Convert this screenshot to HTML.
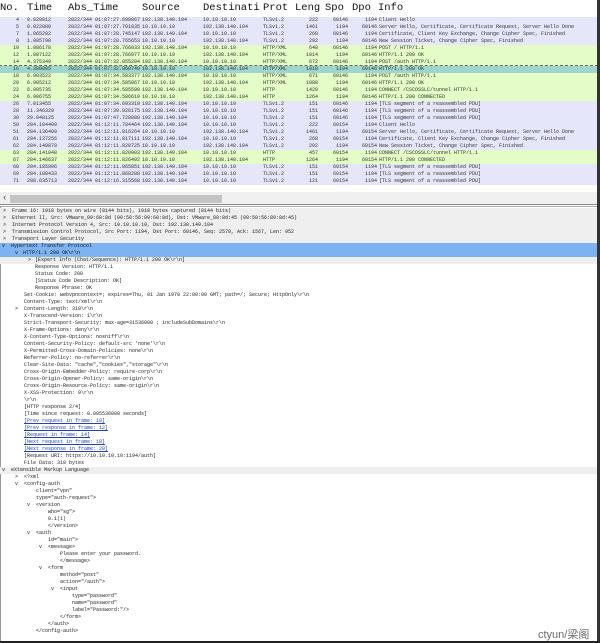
<!DOCTYPE html>
<html><head><meta charset="utf-8"><style>
*{margin:0;padding:0;box-sizing:border-box}
body{width:600px;height:643px;overflow:hidden;background:#fff;position:relative;font-family:"Liberation Mono",monospace;color:#222}
.hd{position:absolute;top:0;left:0;width:600px;height:17px;font-size:10.5px;line-height:16px;color:#111}
.hd span{position:absolute;top:0}
.r{position:absolute;left:0;width:597px;height:7px;font-size:5px;line-height:7px;color:#333;white-space:pre}
.r span{position:absolute;top:0}
.t{background:#e6e6fb}.h{background:#e4fcc6}.s{background:#9fd6cc;outline:1px dashed #666}
.d{position:absolute;left:0;width:597px;height:7px;font-size:5px;line-height:7px;white-space:pre;color:#222}
.g{background:#efefef}.b{background:#7db3f0;color:#112}
.ar{position:absolute;top:0;font-size:5px}
a{color:#2040c0;text-decoration:underline}
</style></head><body>
<div class="hd"><span style="left:0">No.</span><span style="left:27px">Time</span><span style="left:68px">Abs_Time</span><span style="left:142px">Source</span><span style="left:203px">Destinati</span><span style="left:263px">Prot</span><span style="left:295px">Leng</span><span style="left:325px">Spo</span><span style="left:352px">Dpo</span><span style="left:378px">Info</span></div>

<div class="r t" style="top:17px"><span style="right:578px">4</span><span style="left:27px">0.020012</span><span style="left:68px">2022/344 01:07:27.699867</span><span style="left:142px">192.138.140.104</span><span style="left:203px">10.10.10.10</span><span style="left:263px">TLSv1.2</span><span style="right:279px">222</span><span style="right:249px">60146</span><span style="right:220px">1194</span><span style="left:379px">Client Hello</span></div>
<div class="r t" style="top:24px"><span style="right:578px">5</span><span style="left:27px">0.022080</span><span style="left:68px">2022/344 01:07:27.701835</span><span style="left:142px">10.10.10.10</span><span style="left:203px">192.138.140.104</span><span style="left:263px">TLSv1.2</span><span style="right:279px">1461</span><span style="right:249px">1194</span><span style="right:220px">60146</span><span style="left:379px">Server Hello, Certificate, Certificate Request, Server Hello Done</span></div>
<div class="r t" style="top:31px"><span style="right:578px">7</span><span style="left:27px">1.065292</span><span style="left:68px">2022/344 01:07:28.745147</span><span style="left:142px">192.138.140.104</span><span style="left:203px">10.10.10.10</span><span style="left:263px">TLSv1.2</span><span style="right:279px">268</span><span style="right:249px">60146</span><span style="right:220px">1194</span><span style="left:379px">Certificate, Client Key Exchange, Change Cipher Spec, Finished</span></div>
<div class="r t" style="top:38px"><span style="right:578px">8</span><span style="left:27px">1.085798</span><span style="left:68px">2022/344 01:07:28.765653</span><span style="left:142px">10.10.10.10</span><span style="left:203px">192.138.140.104</span><span style="left:263px">TLSv1.2</span><span style="right:279px">292</span><span style="right:249px">1194</span><span style="right:220px">60146</span><span style="left:379px">New Session Ticket, Change Cipher Spec, Finished</span></div>
<div class="r h" style="top:45px"><span style="right:578px">10</span><span style="left:27px">1.086178</span><span style="left:68px">2022/344 01:07:28.766033</span><span style="left:142px">192.138.140.104</span><span style="left:203px">10.10.10.10</span><span style="left:263px">HTTP/XML</span><span style="right:279px">648</span><span style="right:249px">60146</span><span style="right:220px">1194</span><span style="left:379px">POST / HTTP/1.1</span></div>
<div class="r h" style="top:52px"><span style="right:578px">12</span><span style="left:27px">1.087122</span><span style="left:68px">2022/344 01:07:28.766977</span><span style="left:142px">10.10.10.10</span><span style="left:203px">192.138.140.104</span><span style="left:263px">HTTP/XML</span><span style="right:279px">1014</span><span style="right:249px">1194</span><span style="right:220px">60146</span><span style="left:379px">HTTP/1.1 200 OK</span></div>
<div class="r h" style="top:59px"><span style="right:578px">14</span><span style="left:27px">4.375349</span><span style="left:68px">2022/344 01:07:32.055204</span><span style="left:142px">192.138.140.104</span><span style="left:203px">10.10.10.10</span><span style="left:263px">HTTP/XML</span><span style="right:279px">672</span><span style="right:249px">60146</span><span style="right:220px">1194</span><span style="left:379px">POST /auth HTTP/1.1</span></div>
<div class="r s" style="top:66px"><span style="right:578px">16</span><span style="left:27px">4.380885</span><span style="left:68px">2022/344 01:07:32.060740</span><span style="left:142px">10.10.10.10</span><span style="left:203px">192.138.140.104</span><span style="left:263px">HTTP/XML</span><span style="right:279px">1018</span><span style="right:249px">1194</span><span style="right:220px">60146</span><span style="left:379px">HTTP/1.1 200 OK</span></div>
<div class="r h" style="top:73px"><span style="right:578px">18</span><span style="left:27px">6.903522</span><span style="left:68px">2022/344 01:07:34.583377</span><span style="left:142px">192.138.140.104</span><span style="left:203px">10.10.10.10</span><span style="left:263px">HTTP/XML</span><span style="right:279px">671</span><span style="right:249px">60146</span><span style="right:220px">1194</span><span style="left:379px">POST /auth HTTP/1.1</span></div>
<div class="r h" style="top:80px"><span style="right:578px">20</span><span style="left:27px">6.905212</span><span style="left:68px">2022/344 01:07:34.585067</span><span style="left:142px">10.10.10.10</span><span style="left:203px">192.138.140.104</span><span style="left:263px">HTTP/XML</span><span style="right:279px">1088</span><span style="right:249px">1194</span><span style="right:220px">60146</span><span style="left:379px">HTTP/1.1 200 OK</span></div>
<div class="r h" style="top:87px"><span style="right:578px">22</span><span style="left:27px">6.905735</span><span style="left:68px">2022/344 01:07:34.585590</span><span style="left:142px">192.138.140.104</span><span style="left:203px">10.10.10.10</span><span style="left:263px">HTTP</span><span style="right:279px">1420</span><span style="right:249px">60146</span><span style="right:220px">1194</span><span style="left:379px">CONNECT /CSCOSSLC/tunnel HTTP/1.1</span></div>
<div class="r h" style="top:94px"><span style="right:578px">24</span><span style="left:27px">6.906755</span><span style="left:68px">2022/344 01:07:34.586610</span><span style="left:142px">10.10.10.10</span><span style="left:203px">192.138.140.104</span><span style="left:263px">HTTP</span><span style="right:279px">1264</span><span style="right:249px">1194</span><span style="right:220px">60146</span><span style="left:379px">HTTP/1.1 200 CONNECTED</span></div>
<div class="r t" style="top:101px"><span style="right:578px">26</span><span style="left:27px">7.013455</span><span style="left:68px">2022/344 01:07:34.693310</span><span style="left:142px">192.138.140.104</span><span style="left:203px">10.10.10.10</span><span style="left:263px">TLSv1.2</span><span style="right:279px">151</span><span style="right:249px">60146</span><span style="right:220px">1194</span><span style="left:379px">[TLS segment of a reassembled PDU]</span></div>
<div class="r t" style="top:108px"><span style="right:578px">28</span><span style="left:27px">11.346320</span><span style="left:68px">2022/344 01:07:39.026175</span><span style="left:142px">192.138.140.104</span><span style="left:203px">10.10.10.10</span><span style="left:263px">TLSv1.2</span><span style="right:279px">151</span><span style="right:249px">60146</span><span style="right:220px">1194</span><span style="left:379px">[TLS segment of a reassembled PDU]</span></div>
<div class="r t" style="top:115px"><span style="right:578px">30</span><span style="left:27px">20.048125</span><span style="left:68px">2022/344 01:07:47.728080</span><span style="left:142px">192.138.140.104</span><span style="left:203px">10.10.10.10</span><span style="left:263px">TLSv1.2</span><span style="right:279px">151</span><span style="right:249px">60146</span><span style="right:220px">1194</span><span style="left:379px">[TLS segment of a reassembled PDU]</span></div>
<div class="r t" style="top:122px"><span style="right:578px">50</span><span style="left:27px">284.104409</span><span style="left:68px">2022/344 01:12:11.784464</span><span style="left:142px">192.138.140.104</span><span style="left:203px">10.10.10.10</span><span style="left:263px">TLSv1.2</span><span style="right:279px">222</span><span style="right:249px">60154</span><span style="right:220px">1194</span><span style="left:379px">Client Hello</span></div>
<div class="r t" style="top:129px"><span style="right:578px">51</span><span style="left:27px">284.136409</span><span style="left:68px">2022/344 01:12:11.816264</span><span style="left:142px">10.10.10.10</span><span style="left:203px">192.138.140.104</span><span style="left:263px">TLSv1.2</span><span style="right:279px">1461</span><span style="right:249px">1194</span><span style="right:220px">60154</span><span style="left:379px">Server Hello, Certificate, Certificate Request, Server Hello Done</span></div>
<div class="r t" style="top:136px"><span style="right:578px">61</span><span style="left:27px">284.137256</span><span style="left:68px">2022/344 01:12:11.817111</span><span style="left:142px">192.138.140.104</span><span style="left:203px">10.10.10.10</span><span style="left:263px">TLSv1.2</span><span style="right:279px">268</span><span style="right:249px">60154</span><span style="right:220px">1194</span><span style="left:379px">Certificate, Client Key Exchange, Change Cipher Spec, Finished</span></div>
<div class="r t" style="top:143px"><span style="right:578px">62</span><span style="left:27px">284.140870</span><span style="left:68px">2022/344 01:12:11.820725</span><span style="left:142px">10.10.10.10</span><span style="left:203px">192.138.140.104</span><span style="left:263px">TLSv1.2</span><span style="right:279px">292</span><span style="right:249px">1194</span><span style="right:220px">60154</span><span style="left:379px">New Session Ticket, Change Cipher Spec, Finished</span></div>
<div class="r h" style="top:150px"><span style="right:578px">63</span><span style="left:27px">284.141048</span><span style="left:68px">2022/344 01:12:11.820903</span><span style="left:142px">192.138.140.104</span><span style="left:203px">10.10.10.10</span><span style="left:263px">HTTP</span><span style="right:279px">457</span><span style="right:249px">60154</span><span style="right:220px">1194</span><span style="left:379px">CONNECT /CSCOSSLC/tunnel HTTP/1.1</span></div>
<div class="r h" style="top:157px"><span style="right:578px">67</span><span style="left:27px">284.146637</span><span style="left:68px">2022/344 01:12:11.826492</span><span style="left:142px">10.10.10.10</span><span style="left:203px">192.138.140.104</span><span style="left:263px">HTTP</span><span style="right:279px">1264</span><span style="right:249px">1194</span><span style="right:220px">60154</span><span style="left:379px">HTTP/1.1 200 CONNECTED</span></div>
<div class="r t" style="top:164px"><span style="right:578px">68</span><span style="left:27px">284.185996</span><span style="left:68px">2022/344 01:12:11.865851</span><span style="left:142px">192.138.140.104</span><span style="left:203px">10.10.10.10</span><span style="left:263px">TLSv1.2</span><span style="right:279px">151</span><span style="right:249px">60154</span><span style="right:220px">1194</span><span style="left:379px">[TLS segment of a reassembled PDU]</span></div>
<div class="r t" style="top:171px"><span style="right:578px">69</span><span style="left:27px">284.188433</span><span style="left:68px">2022/344 01:12:11.868288</span><span style="left:142px">192.138.140.104</span><span style="left:203px">10.10.10.10</span><span style="left:263px">TLSv1.2</span><span style="right:279px">151</span><span style="right:249px">60154</span><span style="right:220px">1194</span><span style="left:379px">[TLS segment of a reassembled PDU]</span></div>
<div class="r t" style="top:178px"><span style="right:578px">71</span><span style="left:27px">288.635713</span><span style="left:68px">2022/344 01:12:16.315568</span><span style="left:142px">192.138.140.104</span><span style="left:203px">10.10.10.10</span><span style="left:263px">TLSv1.2</span><span style="right:279px">121</span><span style="right:249px">60154</span><span style="right:220px">1194</span><span style="left:379px">[TLS segment of a reassembled PDU]</span></div>

<div style="position:absolute;top:192px;left:0;width:597px;height:12px;background:#f0f0f0"></div>
<div style="position:absolute;top:195px;left:10px;width:212px;height:8px;background:#c4c4c4"></div>
<div style="position:absolute;top:192px;left:2px;font-size:9px;line-height:12px;color:#444">&lsaquo;</div>
<div style="position:absolute;top:204px;left:0;width:597px;height:1px;background:#888"></div>
<div style="position:absolute;top:206px;left:0;width:597px;height:1px;background:#aaa"></div>
<div style="position:absolute;top:207px;left:0;width:1px;height:434px;background:#999"></div>

<div style="position:absolute;top:208px;left:0;width:597px">
<div class="d g" style="position:relative"><span class="ar" style="left:3px">&gt;</span><span style="padding-left:12px">Frame 16: 1018 bytes on wire (8144 bits), 1018 bytes captured (8144 bits)</span></div>
<div class="d g" style="position:relative"><span class="ar" style="left:3px">&gt;</span><span style="padding-left:12px">Ethernet II, Src: VMware_09:60:8d (00:50:56:09:60:8d), Dst: VMware_89:8d:45 (00:50:56:89:8d:45)</span></div>
<div class="d g" style="position:relative"><span class="ar" style="left:3px">&gt;</span><span style="padding-left:12px">Internet Protocol Version 4, Src: 10.10.10.10, Dst: 192.138.140.104</span></div>
<div class="d g" style="position:relative"><span class="ar" style="left:3px">&gt;</span><span style="padding-left:12px">Transmission Control Protocol, Src Port: 1194, Dst Port: 60146, Seq: 2570, Ack: 1567, Len: 952</span></div>
<div class="d g" style="position:relative"><span class="ar" style="left:3px">&gt;</span><span style="padding-left:12px">Transport Layer Security</span></div>
<div class="d b" style="position:relative"><span class="ar" style="left:2px">v</span><span style="padding-left:11px">Hypertext Transfer Protocol</span></div>
<div class="d b" style="position:relative"><span class="ar" style="left:15px">v</span><span style="padding-left:23px">HTTP/1.1 200 OK\r\n</span></div>
<div class="d g" style="position:relative"><span class="ar" style="left:28px">&gt;</span><span style="padding-left:35px">[Expert Info (Chat/Sequence): HTTP/1.1 200 OK\r\n]</span></div>
<div class="d" style="position:relative"><span style="padding-left:35px">Response Version: HTTP/1.1</span></div>
<div class="d" style="position:relative"><span style="padding-left:35px">Status Code: 200</span></div>
<div class="d" style="position:relative"><span style="padding-left:35px">[Status Code Description: OK]</span></div>
<div class="d" style="position:relative"><span style="padding-left:35px">Response Phrase: OK</span></div>
<div class="d" style="position:relative"><span style="padding-left:24px">Set-Cookie: webvpncontext=; expires=Thu, 01 Jan 1970 22:00:00 GMT; path=/; Secure; HttpOnly\r\n</span></div>
<div class="d" style="position:relative"><span style="padding-left:24px">Content-Type: text/xml\r\n</span></div>
<div class="d" style="position:relative"><span class="ar" style="left:15px">&gt;</span><span style="padding-left:24px">Content-Length: 310\r\n</span></div>
<div class="d" style="position:relative"><span style="padding-left:24px">X-Transcend-Version: 1\r\n</span></div>
<div class="d" style="position:relative"><span style="padding-left:24px">Strict-Transport-Security: max-age=31536000 ; includeSubDomains\r\n</span></div>
<div class="d" style="position:relative"><span style="padding-left:24px">X-Frame-Options: deny\r\n</span></div>
<div class="d" style="position:relative"><span style="padding-left:24px">X-Content-Type-Options: nosniff\r\n</span></div>
<div class="d" style="position:relative"><span style="padding-left:24px">Content-Security-Policy: default-src 'none'\r\n</span></div>
<div class="d" style="position:relative"><span style="padding-left:24px">X-Permitted-Cross-Domain-Policies: none\r\n</span></div>
<div class="d" style="position:relative"><span style="padding-left:24px">Referrer-Policy: no-referrer\r\n</span></div>
<div class="d" style="position:relative"><span style="padding-left:24px">Clear-Site-Data: "cache","cookies","storage"\r\n</span></div>
<div class="d" style="position:relative"><span style="padding-left:24px">Cross-Origin-Embedder-Policy: require-corp\r\n</span></div>
<div class="d" style="position:relative"><span style="padding-left:24px">Cross-Origin-Opener-Policy: same-origin\r\n</span></div>
<div class="d" style="position:relative"><span style="padding-left:24px">Cross-Origin-Resource-Policy: same-origin\r\n</span></div>
<div class="d" style="position:relative"><span style="padding-left:24px">X-XSS-Protection: 0\r\n</span></div>
<div class="d" style="position:relative"><span style="padding-left:24px">\r\n</span></div>
<div class="d" style="position:relative"><span style="padding-left:24px">[HTTP response 2/4]</span></div>
<div class="d" style="position:relative"><span style="padding-left:24px">[Time since request: 0.005536000 seconds]</span></div>
<div class="d" style="position:relative"><span style="padding-left:24px"><a>[Prev request in frame: 10]</a></span></div>
<div class="d" style="position:relative"><span style="padding-left:24px"><a>[Prev response in frame: 12]</a></span></div>
<div class="d" style="position:relative"><span style="padding-left:24px"><a>[Request in frame: 14]</a></span></div>
<div class="d" style="position:relative"><span style="padding-left:24px"><a>[Next request in frame: 18]</a></span></div>
<div class="d" style="position:relative"><span style="padding-left:24px"><a>[Next response in frame: 20]</a></span></div>
<div class="d" style="position:relative"><span style="padding-left:24px">[Request URI: https://10.10.10.10:1194/auth]</span></div>
<div class="d" style="position:relative"><span style="padding-left:24px">File Data: 310 bytes</span></div>
<div class="d g" style="position:relative"><span class="ar" style="left:2px">v</span><span style="padding-left:11px">eXtensible Markup Language</span></div>
<div class="d" style="position:relative"><span class="ar" style="left:15px">&gt;</span><span style="padding-left:24px">&lt;?xml</span></div>
<div class="d" style="position:relative"><span class="ar" style="left:15px">v</span><span style="padding-left:24px">&lt;config-auth</span></div>
<div class="d" style="position:relative"><span style="padding-left:36px">client="vpn"</span></div>
<div class="d" style="position:relative"><span style="padding-left:36px">type="auth-request"&gt;</span></div>
<div class="d" style="position:relative"><span class="ar" style="left:27px">v</span><span style="padding-left:36px">&lt;version</span></div>
<div class="d" style="position:relative"><span style="padding-left:48px">who="sg"&gt;</span></div>
<div class="d" style="position:relative"><span style="padding-left:48px">0.1(1)</span></div>
<div class="d" style="position:relative"><span style="padding-left:48px">&lt;/version&gt;</span></div>
<div class="d" style="position:relative"><span class="ar" style="left:27px">v</span><span style="padding-left:36px">&lt;auth</span></div>
<div class="d" style="position:relative"><span style="padding-left:48px">id="main"&gt;</span></div>
<div class="d" style="position:relative"><span class="ar" style="left:39px">v</span><span style="padding-left:48px">&lt;message&gt;</span></div>
<div class="d" style="position:relative"><span style="padding-left:60px">Please enter your password.</span></div>
<div class="d" style="position:relative"><span style="padding-left:60px">&lt;/message&gt;</span></div>
<div class="d" style="position:relative"><span class="ar" style="left:39px">v</span><span style="padding-left:48px">&lt;form</span></div>
<div class="d" style="position:relative"><span style="padding-left:60px">method="post"</span></div>
<div class="d" style="position:relative"><span style="padding-left:60px">action="/auth"&gt;</span></div>
<div class="d" style="position:relative"><span class="ar" style="left:51px">v</span><span style="padding-left:60px">&lt;input</span></div>
<div class="d" style="position:relative"><span style="padding-left:72px">type="password"</span></div>
<div class="d" style="position:relative"><span style="padding-left:72px">name="password"</span></div>
<div class="d" style="position:relative"><span style="padding-left:72px">label="Password:"/&gt;</span></div>
<div class="d" style="position:relative"><span style="padding-left:60px">&lt;/form&gt;</span></div>
<div class="d" style="position:relative"><span style="padding-left:48px">&lt;/auth&gt;</span></div>
<div class="d" style="position:relative"><span style="padding-left:36px">&lt;/config-auth&gt;</span></div>
</div>

<div style="position:absolute;top:0;left:597px;width:3px;height:643px;background:#333"></div>
<div style="position:absolute;top:641px;left:0;width:600px;height:2px;background:#222"></div>
<div style="position:absolute;top:629px;left:538px;font-family:'Liberation Sans','Noto Sans CJK SC',sans-serif;font-size:11px;line-height:12px;color:#6b6b6b">ctyun/梁阁</div>
</body></html>
